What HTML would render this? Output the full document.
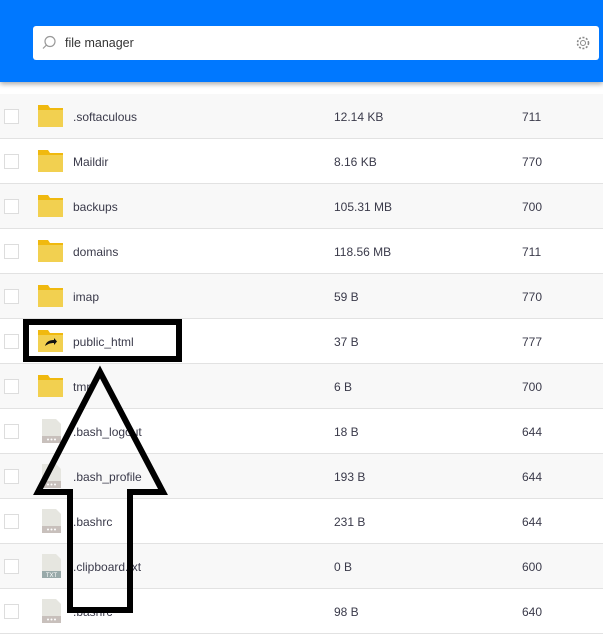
<!DOCTYPE html>
<html><head><style>
*{margin:0;padding:0;box-sizing:border-box}
body{width:603px;height:627px;overflow:hidden;background:#fff;font-family:"Liberation Sans",sans-serif;font-size:12px;color:#3a3a4a;position:relative}
.hdr{position:absolute;left:0;top:0;width:603px;height:82px;background:#0078ff;box-shadow:0 2px 5px rgba(0,0,0,.35);z-index:2}
.sb{position:absolute;left:33px;top:26px;width:566px;height:34px;background:#fff;border-radius:3px}
.sb span{position:absolute;left:32px;top:10px;font-size:12.5px;color:#333}
.row{position:absolute;left:0;width:603px;height:45px;border-bottom:1px solid #e2e2e2}
.g{background:#f8f8f8}
.cb{position:absolute;left:4px;top:15px;width:15px;height:15px;border:1px solid #ddd;background:#fff}
.nm{position:absolute;left:73px;top:16px}
.sz{position:absolute;left:334px;top:16px}
.pm{position:absolute;left:522px;top:16px}
.fo{position:absolute;left:38px;top:11px;width:25px;height:22px}
.fi{position:absolute;left:42px;top:10px;width:19px;height:24px}
</style></head><body>
<div class="hdr"><div class="sb">
<svg style="position:absolute;left:9px;top:9px" width="16" height="16" viewBox="0 0 16 16"><circle cx="8" cy="6.5" r="5" fill="none" stroke="#999" stroke-width="1.2"/><line x1="4.5" y1="10" x2="1" y2="13.5" stroke="#999" stroke-width="1.2"/></svg>
<span>file manager</span>
<svg style="position:absolute;left:542px;top:9px" width="16" height="16" viewBox="0 0 16 16"><circle cx="8" cy="8" r="2.5" fill="none" stroke="#888" stroke-width="1"/><circle cx="8" cy="8" r="5.5" fill="none" stroke="#888" stroke-width="1.6" stroke-dasharray="2 1.6"/></svg>
</div></div>
<div id="rows"></div>
<script>
var d=[["f",".softaculous","12.14 KB","711"],["f","Maildir","8.16 KB","770"],["f","backups","105.31 MB","700"],["f","domains","118.56 MB","711"],["f","imap","59 B","770"],["l","public_html","37 B","777"],["f","tmp","6 B","700"],["d",".bash_logout","18 B","644"],["d",".bash_profile","193 B","644"],["d",".bashrc","231 B","644"],["t",".clipboard.txt","0 B","600"],["d",".bashrc","98 B","640"]];
var h="";
d.forEach(function(r,i){
var ic;
if(r[0]=="f"||r[0]=="l"){ic='<svg class="fo" viewBox="0 0 25 22"><path d="M0 0h10l2 3h13v19H0z" fill="#f0b90f"/><rect y="5" width="25" height="17" fill="#f2d050"/>'+(r[0]=="l"?'<path d="M7 16c1-4 4-6 9-6v-2l3 3.5-3 3.5v-2c-4 0-6 1-9 3z" fill="#111"/>':'')+'</svg>';}
else{ic='<svg class="fi" viewBox="0 0 19 24"><path d="M0 0h14l5 5v19H0z" fill="#e6e6e0"/><rect y="17" width="19" height="7" fill="'+(r[0]=="t"?"#9aa":"#c8c0bc")+'"/>'+(r[0]=="t"?'<text x="9.5" y="23" font-size="6" fill="#fff" text-anchor="middle" font-family="Liberation Sans">TXT</text>':'<circle cx="6" cy="20.5" r="1" fill="#fff"/><circle cx="9.5" cy="20.5" r="1" fill="#fff"/><circle cx="13" cy="20.5" r="1" fill="#fff"/>')+'</svg>';}
h+='<div class="row'+(i%2==0?' g':'')+'" style="top:'+(94+45*i)+'px"><div class="cb"></div>'+ic+'<div class="nm">'+r[1]+'</div><div class="sz">'+r[2]+'</div><div class="pm">'+r[3]+'</div></div>';
});
document.getElementById("rows").innerHTML=h;
</script>
<svg style="position:absolute;left:0;top:0" width="603" height="627">
<rect x="26" y="322" width="153" height="37" fill="none" stroke="#000" stroke-width="6"/>
<polygon points="100,372 38,492 70,492 70,610 130,610 130,492 163,492" fill="none" stroke="#000" stroke-width="6" stroke-linejoin="miter"/>
</svg>
</body></html>
